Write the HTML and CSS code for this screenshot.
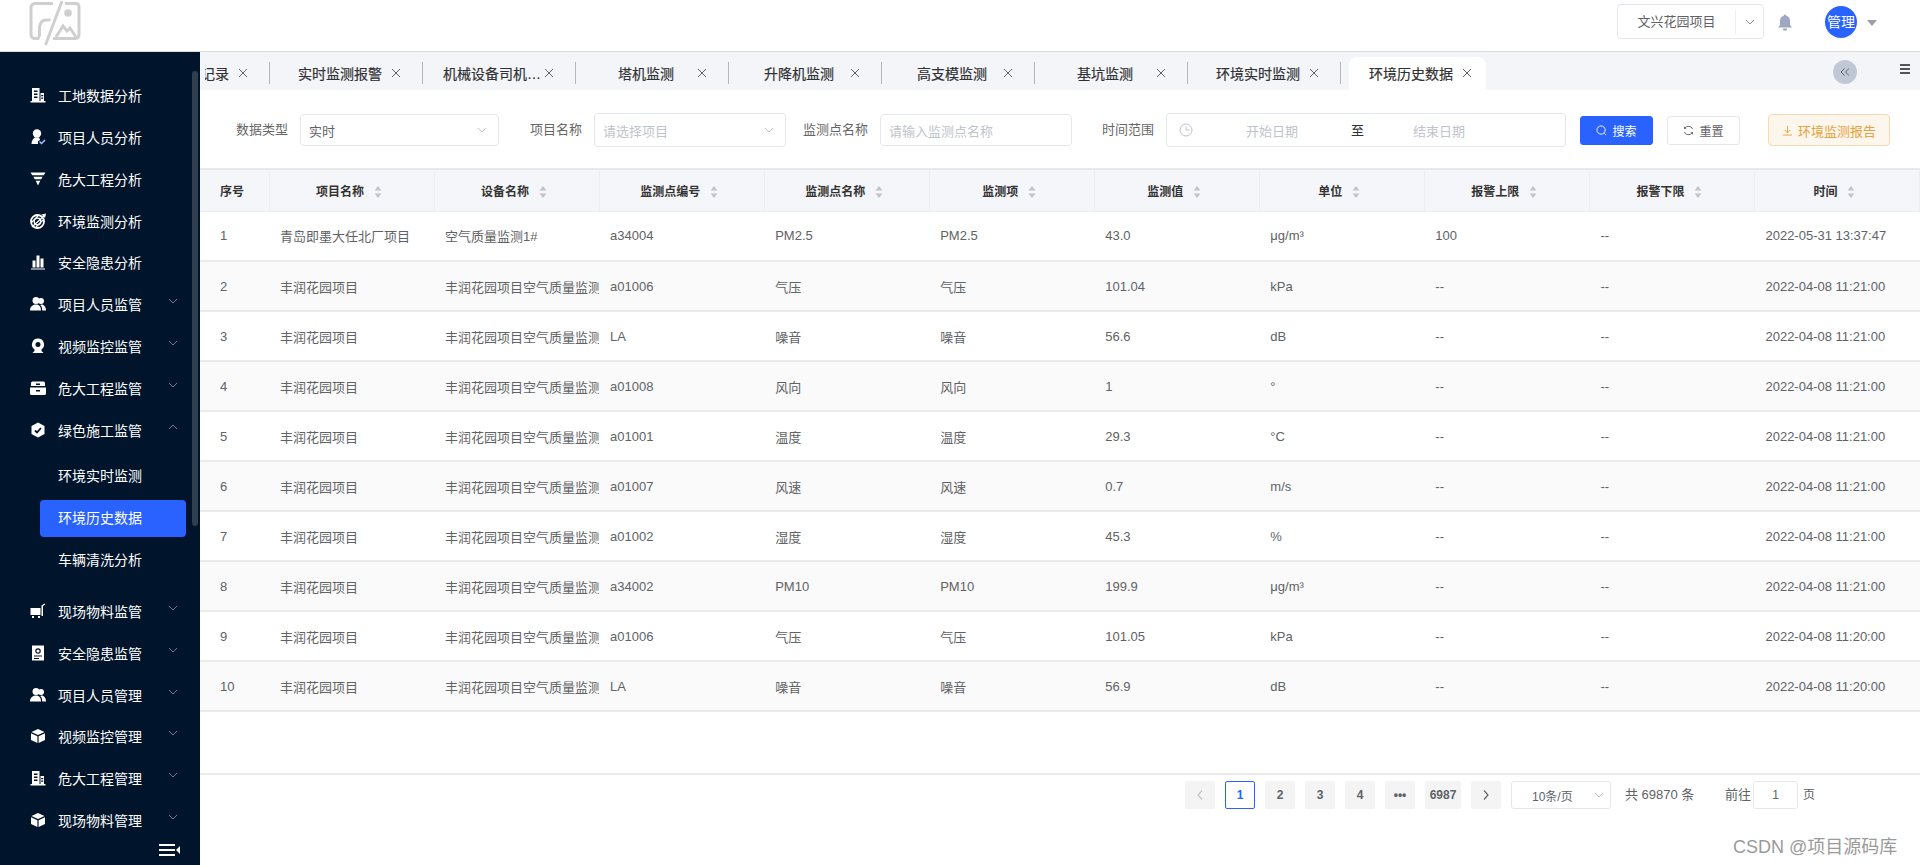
FILE: index.html
```html
<!DOCTYPE html>
<html lang="zh-CN">
<head>
<meta charset="utf-8">
<title>环境历史数据</title>
<link rel="stylesheet" href="styles.css">
</head>
<body>
<svg class="defs" width="0" height="0">
  <symbol id="i-build" viewBox="0 0 16 16"><path fill="currentColor" d="M2 1h7.500v13H2zM10.500 6h3.500v8h-3.500zM0.500 14h15v1.500H0.500z"/><path fill="#00142b" d="M4 3.500h3.500v1.500H4zM4 6.500h3.500V8H4zM4 9.500h3.500V11H4zM11.200 8h2v1.200h-2zM11.200 10.500h2v1.200h-2z"/></symbol>
  <symbol id="i-person" viewBox="0 0 16 16"><circle cx="7" cy="4.500" r="4.200" fill="currentColor"/><path fill="currentColor" d="M4.800 8.500h4.400l.8 2.500-2 1.200v2.800H1.500c0-3 1.200-5 3.300-6.500z"/><path fill="none" stroke="#9fc7ff" stroke-width="1.500" d="M9.500 12.500l2 2 3.500-3.500"/></symbol>
  <symbol id="i-funnel" viewBox="0 0 16 16"><path fill="currentColor" d="M0.500 1.500h15l-1.800 2.800H2.300zM3.400 5.800h9.200l-1.400 2.400H4.800zM5.700 9.800h4.600L8 14.500z"/></symbol>
  <symbol id="i-target" viewBox="0 0 16 16"><circle cx="7.500" cy="8.500" r="6.500" fill="none" stroke="currentColor" stroke-width="1.800"/><circle cx="7.500" cy="8.500" r="3.300" fill="none" stroke="currentColor" stroke-width="1.300"/><path fill="none" stroke="currentColor" stroke-width="1.300" d="M2 14L15 2M1.500 9.500L8 3M6 14l7-7"/><path fill="currentColor" d="M11.500 1.500L16 0.500l-1 4.500z"/></symbol>
  <symbol id="i-bars" viewBox="0 0 16 16"><path fill="currentColor" d="M2.500 6.500h3v7h-3zM6.500 1.500h3v12h-3zM10.500 4.500h3v9h-3zM1 14.500h14v1H1z"/></symbol>
  <symbol id="i-users" viewBox="0 0 16 16"><circle cx="6" cy="4.500" r="3.500" fill="currentColor"/><circle cx="11" cy="5" r="3" fill="currentColor"/><path fill="currentColor" d="M0 14.500c0-3.500 2.500-6 6-6s5 2.500 5 6zM11.500 8.500c2.500 0 4.500 2.500 4.500 6h-3.800c0-2.500-.5-4.500-2-5.500z"/></symbol>
  <symbol id="i-cam" viewBox="0 0 16 16"><path fill="currentColor" fill-rule="evenodd" d="M8 0.500a6 6 0 0 1 3.500 10.900V13l2 2h-11l2-2v-1.600A6 6 0 0 1 8 0.500zM8 4a2.500 2.500 0 1 0 0 5 2.500 2.500 0 0 0 0-5z"/></symbol>
  <symbol id="i-case" viewBox="0 0 16 16"><path fill="currentColor" d="M2.500 1.500h11A1.500 1.500 0 0 1 15 3v3H1V3a1.500 1.500 0 0 1 1.500-1.500zM0 7.500h16v6a1.500 1.500 0 0 1-1.500 1.500h-13A1.500 1.500 0 0 1 0 13.500z"/><path fill="#00142b" d="M6 3.500h4V5H6zM6 10h4v1.500H6z"/></symbol>
  <symbol id="i-hex" viewBox="0 0 16 16"><path fill="currentColor" d="M8 0.500l6.500 3.500v8L8 15.500 1.500 12V4z"/><path fill="none" stroke="#00142b" stroke-width="1.800" d="M5 8.500l2 2 4-4.500"/></symbol>
  <symbol id="i-cart" viewBox="0 0 16 16"><path fill="currentColor" d="M0.500 5h10v7h-10zM11.500 2.500l3-2 .7 1-2.200 1.500V13h-1.500zM2 13h2v2H2zM8 13h2v2H8z"/></symbol>
  <symbol id="i-card" viewBox="0 0 16 16"><path fill="currentColor" d="M2 0.500h12V15.500H2z"/><circle cx="8" cy="6" r="2.200" fill="none" stroke="#00142b" stroke-width="1.200"/><path fill="none" stroke="#00142b" stroke-width="1.200" d="M4 11h8M4 13.500h5"/></symbol>
  <symbol id="i-cube" viewBox="0 0 16 16"><path fill="currentColor" d="M8 1l6.500 3L8 7 1.500 4zM1 5.200l6.400 3V15L1 12zM15 5.200l-6.400 3V15L15 12z"/></symbol>
  <symbol id="i-chev" viewBox="0 0 10 6"><path fill="none" stroke="currentColor" d="M1 1l4 4 4-4"/></symbol>
  <symbol id="i-close" viewBox="0 0 10 10"><path fill="none" stroke="currentColor" d="M1 1l8 8M9 1l-8 8"/></symbol>
  <symbol id="i-sort" viewBox="0 0 8 14"><path fill="currentColor" d="M4 1l3.500 4.500H.5zM4 13L.5 8.500h7z"/></symbol>
</svg>

<header class="topbar">
  <svg class="logo" viewBox="0 0 52 48"><g fill="none" stroke="#cfcfcf" stroke-width="3"><path d="M24 3.500H6a4 4 0 0 0-4 4v27a4 4 0 0 0 4 4h3l1.500-3V27q1-7 7-7h4"/><path d="M36 3.500h11a3 3 0 0 1 3 3v28a4 4 0 0 1-4 4H24"/><path d="M33 1L16.500 45"/><path d="M27 37l7-11 4 5 3-3 6 9"/></g><circle cx="39" cy="13" r="3.800" fill="#cfcfcf"/></svg>
  <div class="topbar-right">
    <div class="project-select"><span class="project-name">文兴花园项目</span><svg class="project-chev"><use href="#i-chev"/></svg></div>
    <svg class="bell" viewBox="0 0 16 18"><path fill="#9ea8c2" d="M8 1.500a1.300 1.300 0 0 1 1.300 1.300A5 5 0 0 1 13 7.500V12l2 2.500H1L3 12V7.500a5 5 0 0 1 3.700-4.700A1.300 1.300 0 0 1 8 1.500z"/><path fill="#9ea8c2" d="M5.800 15.500h4.400a2.200 2.200 0 0 1-4.400 0z"/></svg>
    <div class="avatar">管理</div>
    <span class="caret"></span>
  </div>
</header>

<div class="body-row">
  <aside class="sidebar">
    <nav class="menu">
      <a class="menu-item"><svg class="mi-icon"><use href="#i-build"/></svg><span>工地数据分析</span></a>
      <a class="menu-item"><svg class="mi-icon"><use href="#i-person"/></svg><span>项目人员分析</span></a>
      <a class="menu-item"><svg class="mi-icon"><use href="#i-funnel"/></svg><span>危大工程分析</span></a>
      <a class="menu-item"><svg class="mi-icon"><use href="#i-target"/></svg><span>环境监测分析</span></a>
      <a class="menu-item"><svg class="mi-icon"><use href="#i-bars"/></svg><span>安全隐患分析</span></a>
      <a class="menu-item"><svg class="mi-icon"><use href="#i-users"/></svg><span>项目人员监管</span><svg class="mi-chev"><use href="#i-chev"/></svg></a>
      <a class="menu-item"><svg class="mi-icon"><use href="#i-cam"/></svg><span>视频监控监管</span><svg class="mi-chev"><use href="#i-chev"/></svg></a>
      <a class="menu-item"><svg class="mi-icon"><use href="#i-case"/></svg><span>危大工程监管</span><svg class="mi-chev"><use href="#i-chev"/></svg></a>
      <a class="menu-item"><svg class="mi-icon"><use href="#i-hex"/></svg><span>绿色施工监管</span><svg class="mi-chev mi-chev-up"><use href="#i-chev"/></svg></a>
      <div class="submenu">
        <a class="sub-item">环境实时监测</a>
        <a class="sub-item active">环境历史数据</a>
        <a class="sub-item">车辆清洗分析</a>
      </div>
      <a class="menu-item"><svg class="mi-icon"><use href="#i-cart"/></svg><span>现场物料监管</span><svg class="mi-chev"><use href="#i-chev"/></svg></a>
      <a class="menu-item"><svg class="mi-icon"><use href="#i-card"/></svg><span>安全隐患监管</span><svg class="mi-chev"><use href="#i-chev"/></svg></a>
      <a class="menu-item"><svg class="mi-icon"><use href="#i-users"/></svg><span>项目人员管理</span><svg class="mi-chev"><use href="#i-chev"/></svg></a>
      <a class="menu-item"><svg class="mi-icon"><use href="#i-cube"/></svg><span>视频监控管理</span><svg class="mi-chev"><use href="#i-chev"/></svg></a>
      <a class="menu-item"><svg class="mi-icon"><use href="#i-build"/></svg><span>危大工程管理</span><svg class="mi-chev"><use href="#i-chev"/></svg></a>
      <a class="menu-item"><svg class="mi-icon"><use href="#i-cube"/></svg><span>现场物料管理</span><svg class="mi-chev"><use href="#i-chev"/></svg></a>
    </nav>
    <div class="side-scroll"></div>
    <svg class="side-collapse" viewBox="0 0 22 14"><path fill="#fff" d="M0 1h16v2H0zM0 6h16v2H0zM0 11h16v2H0zM21 3v8l-4-4z"/></svg>
  </aside>

  <main class="content">
    <div class="tabbar">
      <div class="tabs">
        <div class="tab tab-first"><span class="tab-text">设备运行记录</span><svg class="tab-x"><use href="#i-close"/></svg></div>
        <div class="tab"><span class="tab-text">实时监测报警</span><svg class="tab-x"><use href="#i-close"/></svg></div>
        <div class="tab"><span class="tab-text tab-ell">机械设备司机管理</span><svg class="tab-x"><use href="#i-close"/></svg></div>
        <div class="tab"><span class="tab-text">塔机监测</span><svg class="tab-x"><use href="#i-close"/></svg></div>
        <div class="tab"><span class="tab-text">升降机监测</span><svg class="tab-x"><use href="#i-close"/></svg></div>
        <div class="tab"><span class="tab-text">高支模监测</span><svg class="tab-x"><use href="#i-close"/></svg></div>
        <div class="tab"><span class="tab-text">基坑监测</span><svg class="tab-x"><use href="#i-close"/></svg></div>
        <div class="tab"><span class="tab-text">环境实时监测</span><svg class="tab-x"><use href="#i-close"/></svg></div>
        <div class="tab tab-active"><span class="tab-text">环境历史数据</span><svg class="tab-x"><use href="#i-close"/></svg></div>
      </div>
      <div class="tab-more"><svg viewBox="0 0 10 10"><path fill="none" stroke="#606266" d="M4.500 1.500L1 5l3.500 3.500M9 1.500L5.500 5 9 8.500"/></svg></div>
      <div class="tab-menu"><i></i><i></i><i></i></div>
    </div>

    <form class="filters">
      <label class="f-label">数据类型</label>
      <div class="f-box f-type"><span class="f-val">实时</span><svg class="f-chev"><use href="#i-chev"/></svg></div>
      <label class="f-label f-l2">项目名称</label>
      <div class="f-box f-project"><span class="f-ph">请选择项目</span><svg class="f-chev"><use href="#i-chev"/></svg></div>
      <label class="f-label f-l3">监测点名称</label>
      <div class="f-box f-point"><span class="f-ph">请输入监测点名称</span></div>
      <label class="f-label f-l4">时间范围</label>
      <div class="f-box f-range">
        <svg class="clock" viewBox="0 0 14 14"><circle cx="7" cy="7" r="6" fill="none" stroke="#c0c4cc"/><path fill="none" stroke="#c0c4cc" d="M7 3.500V7h3.500"/></svg>
        <span class="f-ph r-start">开始日期</span><span class="r-to">至</span><span class="f-ph r-end">结束日期</span>
      </div>
      <button class="btn btn-primary" type="button"><svg class="btn-ic" viewBox="0 0 12 12"><circle cx="5.500" cy="5.500" r="4.500" fill="none" stroke="#fff"/><path stroke="#fff" d="M9 9l2 2"/></svg>搜索</button>
      <button class="btn btn-plain" type="button"><svg class="btn-ic" viewBox="0 0 12 12"><path fill="none" stroke="#606266" d="M10.500 4.500A4.800 4.800 0 0 0 2 3.500M1.500 7.500A4.800 4.800 0 0 0 10 8.500"/><path fill="#606266" d="M1 1.500l.3 3 2.700-1zM11 10.500l-.3-3-2.700 1z"/></svg>重置</button>
      <button class="btn btn-warn" type="button"><svg class="btn-ic" viewBox="0 0 12 12"><path fill="none" stroke="#e6a23c" d="M6 1v7M3 5.500L6 8.500l3-3M1 11h10"/></svg>环境监测报告</button>
    </form>

    <div class="table-wrap">
      <table class="data">
        <colgroup><col class="c-seq"><col class="c-w"><col class="c-w"><col class="c-w"><col class="c-w"><col class="c-w"><col class="c-w"><col class="c-w"><col class="c-w"><col class="c-w"><col class="c-w"></colgroup>
        <thead>
          <tr>
            <th class="th-seq">序号</th>
            <th>项目名称<svg class="sort"><use href="#i-sort"/></svg></th>
            <th>设备名称<svg class="sort"><use href="#i-sort"/></svg></th>
            <th>监测点编号<svg class="sort"><use href="#i-sort"/></svg></th>
            <th>监测点名称<svg class="sort"><use href="#i-sort"/></svg></th>
            <th>监测项<svg class="sort"><use href="#i-sort"/></svg></th>
            <th>监测值<svg class="sort"><use href="#i-sort"/></svg></th>
            <th>单位<svg class="sort"><use href="#i-sort"/></svg></th>
            <th>报警上限<svg class="sort"><use href="#i-sort"/></svg></th>
            <th>报警下限<svg class="sort"><use href="#i-sort"/></svg></th>
            <th>时间<svg class="sort"><use href="#i-sort"/></svg></th>
          </tr>
        </thead>
        <tbody>
          <tr><td>1</td><td>青岛即墨大任北厂项目</td><td>空气质量监测1#</td><td>a34004</td><td>PM2.5</td><td>PM2.5</td><td>43.0</td><td>μg/m³</td><td>100</td><td>--</td><td>2022-05-31 13:37:47</td></tr>
          <tr><td>2</td><td>丰润花园项目</td><td>丰润花园项目空气质量监测</td><td>a01006</td><td>气压</td><td>气压</td><td>101.04</td><td>kPa</td><td>--</td><td>--</td><td>2022-04-08 11:21:00</td></tr>
          <tr><td>3</td><td>丰润花园项目</td><td>丰润花园项目空气质量监测</td><td>LA</td><td>噪音</td><td>噪音</td><td>56.6</td><td>dB</td><td>--</td><td>--</td><td>2022-04-08 11:21:00</td></tr>
          <tr><td>4</td><td>丰润花园项目</td><td>丰润花园项目空气质量监测</td><td>a01008</td><td>风向</td><td>风向</td><td>1</td><td>°</td><td>--</td><td>--</td><td>2022-04-08 11:21:00</td></tr>
          <tr><td>5</td><td>丰润花园项目</td><td>丰润花园项目空气质量监测</td><td>a01001</td><td>温度</td><td>温度</td><td>29.3</td><td>°C</td><td>--</td><td>--</td><td>2022-04-08 11:21:00</td></tr>
          <tr><td>6</td><td>丰润花园项目</td><td>丰润花园项目空气质量监测</td><td>a01007</td><td>风速</td><td>风速</td><td>0.7</td><td>m/s</td><td>--</td><td>--</td><td>2022-04-08 11:21:00</td></tr>
          <tr><td>7</td><td>丰润花园项目</td><td>丰润花园项目空气质量监测</td><td>a01002</td><td>湿度</td><td>湿度</td><td>45.3</td><td>%</td><td>--</td><td>--</td><td>2022-04-08 11:21:00</td></tr>
          <tr><td>8</td><td>丰润花园项目</td><td>丰润花园项目空气质量监测</td><td>a34002</td><td>PM10</td><td>PM10</td><td>199.9</td><td>μg/m³</td><td>--</td><td>--</td><td>2022-04-08 11:21:00</td></tr>
          <tr><td>9</td><td>丰润花园项目</td><td>丰润花园项目空气质量监测</td><td>a01006</td><td>气压</td><td>气压</td><td>101.05</td><td>kPa</td><td>--</td><td>--</td><td>2022-04-08 11:20:00</td></tr>
          <tr><td>10</td><td>丰润花园项目</td><td>丰润花园项目空气质量监测</td><td>LA</td><td>噪音</td><td>噪音</td><td>56.9</td><td>dB</td><td>--</td><td>--</td><td>2022-04-08 11:20:00</td></tr>
        </tbody>
      </table>
    </div>

    <footer class="pager">
      <span class="pg pg-dim"><svg viewBox="0 0 8 12"><path fill="none" stroke="#c0c4cc" stroke-width="1.200" d="M6 1.500L2 6l4 4.500"/></svg></span>
      <span class="pg pg-on">1</span>
      <span class="pg">2</span>
      <span class="pg">3</span>
      <span class="pg">4</span>
      <span class="pg">•••</span>
      <span class="pg pg-wide">6987</span>
      <span class="pg"><svg viewBox="0 0 8 12"><path fill="none" stroke="#606266" stroke-width="1.200" d="M2 1.500L6 6l-4 4.500"/></svg></span>
      <div class="pg-size"><span>10条/页</span><svg class="f-chev"><use href="#i-chev"/></svg></div>
      <span class="pg-total">共 69870 条</span>
      <span class="pg-goto">前往</span>
      <span class="pg-input">1</span>
      <span class="pg-unit">页</span>
    </footer>
    <div class="watermark">CSDN @项目源码库</div>
  </main>
</div>
</body>
</html>
```
FILE: styles.css
```css
* { box-sizing: border-box; }
html, body { margin: 0; height: 865px; overflow: hidden; }
body {
  font-family: "Liberation Sans", "Noto Sans CJK SC", sans-serif;
  font-size: 13px;
  color: #606266;
  background: #fff;
  display: flex;
  flex-direction: column;
}
.defs { position: absolute; }

/* top bar */
.topbar {
  height: 52px;
  flex: none;
  display: flex;
  align-items: center;
  background: #fff;
  border-bottom: 1px solid #dcdcdc;
  padding-left: 29px;
  padding-right: 43px;
}
.logo { width: 52px; height: 48px; margin-top: -3px; }
.topbar-right { margin-left: auto; display: flex; align-items: center; margin-top: -8px; }
.project-select {
  width: 147px;
  height: 35px;
  border: 1px solid #e4e7ed;
  border-radius: 4px;
  display: flex;
  align-items: center;
}
.project-name { width: 118px; text-align: center; border-right: 1px solid #eceef2; line-height: 24px; color: #606266; }
.project-chev { width: 10px; height: 6px; margin-left: 9px; color: #909399; }
.bell { width: 16px; height: 18px; margin-left: 13px; }
.avatar {
  width: 32px;
  height: 32px;
  margin-left: 32px;
  border-radius: 50%;
  background: #2962ff;
  color: #fff;
  font-size: 14px;
  line-height: 32px;
  text-align: center;
  white-space: nowrap;
}
.caret {
  width: 0;
  height: 0;
  margin-left: 10px;
  margin-top: 3px;
  border-left: 5px solid transparent;
  border-right: 5px solid transparent;
  border-top: 6px solid #9a9fa8;
}

.body-row { flex: 1; display: flex; min-height: 0; }

/* sidebar */
.sidebar {
  width: 200px;
  flex: none;
  background: #00142b;
  position: relative;
  overflow: hidden;
  color: #fff;
}
.menu { padding-top: 22px; }
.menu-item {
  height: 41.875px;
  display: flex;
  align-items: center;
  padding: 0 22px 0 30px;
  font-size: 14px;
  color: #fff;
}
.mi-icon { width: 16px; height: 16px; margin-right: 12px; flex: none; }
.mi-chev { width: 10px; height: 6px; margin-left: auto; margin-bottom: 6px; color: #6f7b89; }
.mi-chev-up { transform: rotate(180deg); }
.submenu { display: flex; flex-direction: column; gap: 5px; margin: 7px 14px 11px 40px; }
.sub-item {
  height: 37px;
  line-height: 37px;
  padding-left: 18px;
  font-size: 14px;
  color: #fff;
  border-radius: 4px;
}
.sub-item.active { background: #2962ff; }
.side-scroll {
  position: absolute;
  left: 192px;
  top: 19px;
  width: 6px;
  height: 455px;
  border-radius: 3px;
  background: #2f3f50;
}
.side-collapse { position: absolute; left: 159px; top: 791px; width: 22px; height: 14px; }

/* main */
.content { flex: 1; min-width: 0; display: flex; flex-direction: column; position: relative; }
.tabbar {
  height: 38px;
  flex: none;
  background: #f4f5f9;
  display: flex;
  position: relative;
  padding-left: 5px;
}
.tabs { display: flex; width: 1300px; overflow: hidden; }
.tab {
  width: 153px;
  flex: none;
  height: 38px;
  display: flex;
  align-items: center;
  padding: 3px 0 0 20px;
  font-size: 14px;
  color: #303133;
  position: relative;
}
.tab::after {
  content: "";
  position: absolute;
  right: 0;
  top: 10px;
  height: 22px;
  width: 1px;
  background: #b4b6ba;
}
.tab-first { margin-left: -88px; }
.tab-text {
  width: 100px;
  text-align: center;
  white-space: nowrap;
  overflow: hidden;
  text-overflow: ellipsis;
  -webkit-text-stroke: 0.2px #303133;
}
.tab-ell { text-align: left; }
.tab-x { width: 10px; height: 10px; margin-left: 1px; color: #606266; }
.tab-active {
  width: 137px;
  margin-left: 8px;
  margin-top: 5px;
  height: 33px;
  padding: 0 0 2px 20px;
  background: #fff;
  border-radius: 8px 8px 0 0;
}
.tab-active::after { display: none; }
.tab-active .tab-text { width: 84px; }
.tab-active .tab-x { margin-left: 9px; }
.tab-more {
  position: absolute;
  left: 1633px;
  top: 8px;
  width: 24px;
  height: 24px;
  border-radius: 50%;
  background: #c0c8d6;
  display: flex;
  align-items: center;
  justify-content: center;
}
.tab-more svg { width: 10px; height: 10px; }
.tab-menu {
  position: absolute;
  left: 1700px;
  top: 12px;
  width: 10px;
  display: flex;
  flex-direction: column;
  gap: 2px;
}
.tab-menu i { display: block; height: 2px; background: #555; }

/* filters */
.filters {
  height: 78px;
  flex: none;
  display: flex;
  align-items: center;
  padding: 2px 0 0 36px;
  background: #fff;
}
.f-label { width: 52px; margin-right: 12px; flex: none; color: #666; white-space: nowrap; margin-top: -3px; }
.f-l2 { margin-left: 31px; }
.f-l3 { margin-left: 17px; width: 65px; }
.f-l4 { margin-left: 30px; }
.f-box {
  height: 32px;
  border: 1px solid #e4e7ed;
  border-radius: 4px;
  display: flex;
  align-items: center;
  flex: none;
  padding-left: 8px;
  position: relative;
}
.f-type { width: 199px; }
.f-project { width: 192px; height: 34px; }
.f-point { width: 192px; }
.f-range { width: 400px; height: 34px; padding-left: 12px; }
.f-val { color: #606266; }
.f-ph { color: #c0c4cc; }
.f-chev { width: 10px; height: 6px; margin-left: auto; margin-right: 11px; color: #c0c4cc; }
.clock { width: 14px; height: 14px; flex: none; }
.r-start { width: 158px; text-align: center; }
.r-to { width: 13px; color: #303133; margin-top: -2px; }
.r-end { width: 150px; text-align: center; }
.btn {
  font: inherit;
  font-size: 12px;
  height: 29px;
  border-radius: 3px;
  border: 1px solid #e4e7ed;
  padding: 0;
  display: flex;
  align-items: center;
  justify-content: center;
  flex: none;
  background: #fff;
}
.btn-ic { width: 11px; height: 11px; margin-right: 5px; }
.btn-primary { width: 73px; margin-left: 14px; background: #2962ff; border-color: #2962ff; color: #fff; }
.btn-plain { width: 73px; margin-left: 14px; color: #606266; }
.btn-warn { width: 122px; height: 32px; margin-left: 28px; background: #fdf6ec; border-color: #f5dab1; color: #e6a23c; font-size: 13px; border-radius: 4px; }

/* table */
.table-wrap { flex: 1; min-height: 0; border-top: 2px solid #e8e8e8; }
.data { width: 1720px; border-collapse: collapse; table-layout: fixed; }
.c-seq { width: 69px; }
.c-w { width: 165px; }
.data th {
  height: 41px;
  padding: 0 5px 0 0;
  background: #f5f6fa;
  font-size: 12px;
  font-weight: 700;
  color: #333;
  text-align: center;
  border-right: 1px solid #ebeef5;
  border-bottom: 1px solid #ebeef5;
  white-space: nowrap;
}
.data .th-seq { text-align: left; padding-left: 20px; }
.sort { width: 8px; height: 14px; margin-left: 10px; vertical-align: -3px; color: #c0c4cc; }
.data td {
  height: 50px;
  padding: 0 0 0 11px;
  color: #606266;
  border-bottom: 2px solid #ebebeb;
  white-space: nowrap;
  overflow: hidden;
}
.data td:first-child { padding-left: 20px; }
.data tbody tr:nth-child(even) td { background: #fafafa; }

/* pagination */
.pager {
  height: 92px;
  flex: none;
  border-top: 2px solid #ebebeb;
  display: flex;
  align-items: flex-start;
  padding: 6px 0 0 985px;
}
.pg {
  width: 30px;
  height: 28px;
  margin-right: 10px;
  background: #f4f4f5;
  border-radius: 2px;
  font-size: 12px;
  font-weight: 700;
  color: #606266;
  display: flex;
  align-items: center;
  justify-content: center;
  flex: none;
}
.pg svg { width: 8px; height: 12px; }
.pg-wide { width: 36px; }
.pg-on { background: #fff; border: 1px solid #2962ff; color: #2962ff; }
.pg-size {
  width: 100px;
  height: 28px;
  border: 1px solid #e4e7ed;
  border-radius: 3px;
  display: flex;
  align-items: center;
  padding-left: 20px;
  font-size: 12px;
  flex: none;
}
.pg-size .f-chev { margin-right: 6px; }
.pg-total { margin-left: 14px; width: 100px; font-size: 13px; line-height: 28px; flex: none; white-space: nowrap; }
.pg-goto { font-size: 13px; line-height: 28px; width: 28px; flex: none; }
.pg-input {
  width: 45px;
  height: 28px;
  border: 1px solid #e4e7ed;
  border-radius: 3px;
  text-align: center;
  line-height: 26px;
  font-size: 12px;
  flex: none;
}
.pg-unit { margin-left: 5px; font-size: 12px; line-height: 28px; flex: none; }
.watermark {
  position: absolute;
  left: 1533px;
  top: 783px;
  font-size: 18px;
  line-height: 24px;
  color: #9a9a9a;
  white-space: nowrap;
}
```
